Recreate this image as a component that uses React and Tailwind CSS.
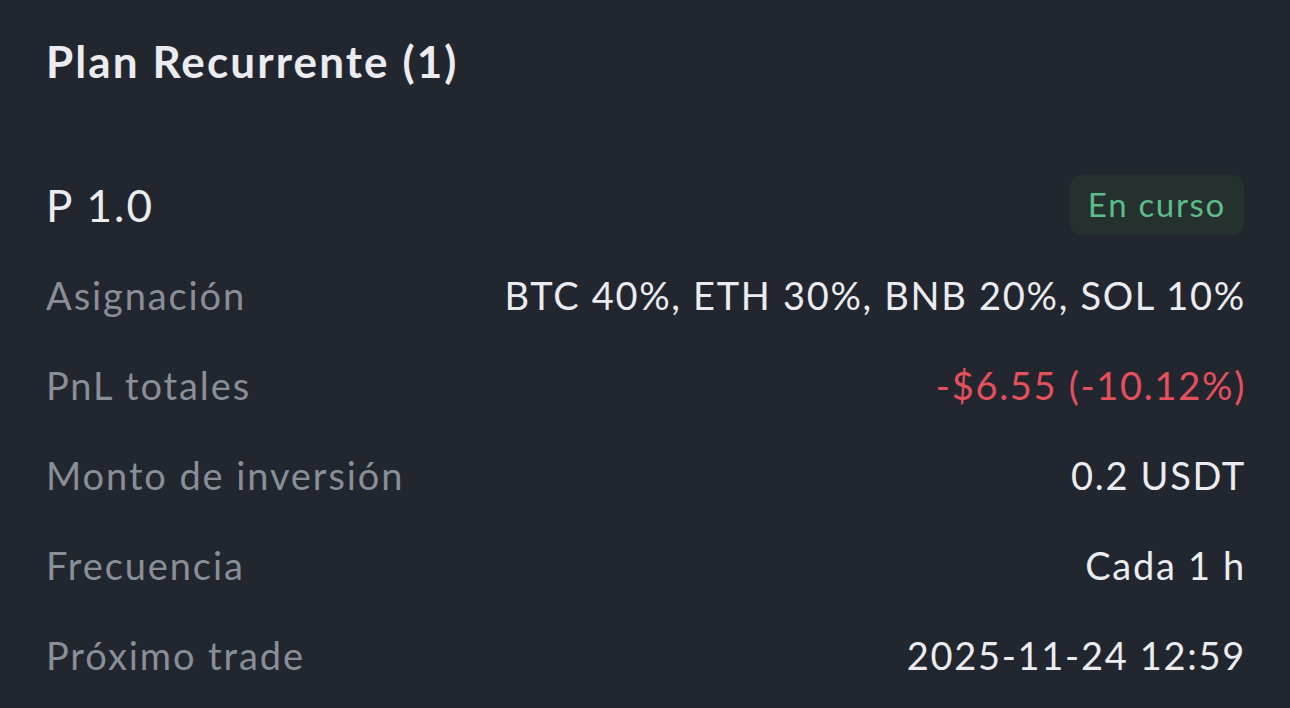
import React from 'react';

const rows = [
  { label: 'Asignación', value: 'BTC 40%, ETH 30%, BNB 20%, SOL 10%' },
  { label: 'PnL totales', value: '-$6.55 (-10.12%)', red: true },
  { label: 'Monto de inversión', value: '0.2 USDT' },
  { label: 'Frecuencia', value: 'Cada 1 h' },
  { label: 'Próximo trade', value: '2025-11-24 12:59' },
];

const App = () => {
  return (
    <div
      className="w-[1290px] h-[708px] overflow-hidden bg-[#22262f] px-[46px]"
      style={{ fontFamily: 'Lato, "Open Sans", sans-serif' }}
    >
      {/* Header */}
      <h1 className="pt-[34px] h-[124px] text-[44px] font-bold leading-[54px] tracking-[2.1px] text-[#eaecef]">
        Plan Recurrente (1)
      </h1>

      {/* Plan card */}
      <div className="flex items-center justify-between h-[62px] mt-[50px]">
        <span className="text-[44px] leading-none tracking-[2px] text-[#eaecef]">P 1.0</span>
        <span className="flex items-center h-[60px] px-[18px] rounded-[12px] bg-[#25312f] text-[33px] tracking-[1.7px] text-[#5cbd8a]">
          En curso
        </span>
      </div>

      <div className="flex flex-col mt-[14px]">
        {rows.map((row) => (
          <div key={row.label} className="flex items-center justify-between h-[90px]">
            <span className="text-[38px] tracking-[1.9px] text-[#898e98]">{row.label}</span>
            <span
              className={`-mr-[2px] text-[38px] tracking-[1.7px] ${row.red ? 'text-[#e4505e]' : 'text-[#eaecef]'}`}
            >
              {row.value}
            </span>
          </div>
        ))}
      </div>
    </div>
  );
};

export default App;
